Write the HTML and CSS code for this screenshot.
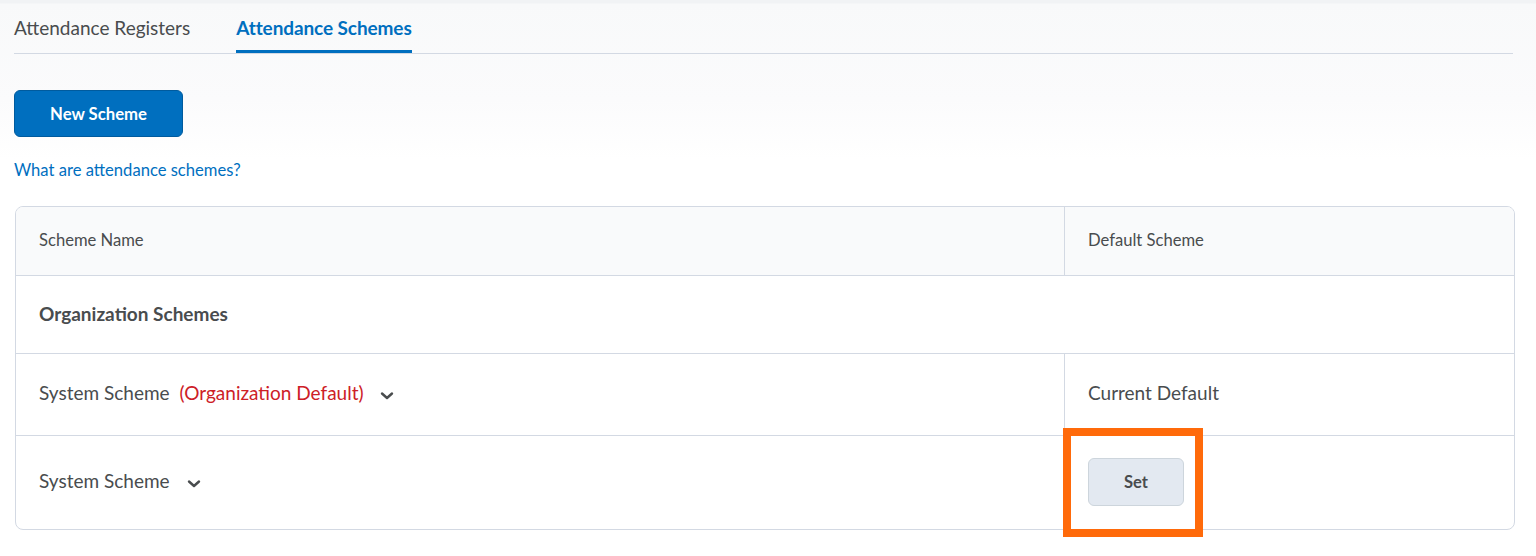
FILE: index.html
```html
<!DOCTYPE html>
<html lang="en">
<head>
<meta charset="utf-8">
<link rel="stylesheet" href="styles.css">
</head>
<body>
<div class="page">
  <nav class="tabs">
    <a class="tab">Attendance Registers</a>
    <a class="tab tab-active">Attendance Schemes</a>
  </nav>
  <div class="actions">
    <button class="btn-primary">New Scheme</button>
  </div>
  <a class="help-link">What are attendance schemes?</a>
  <div class="table-wrap">
    <table class="schemes">
      <colgroup>
        <col class="c-name">
        <col class="c-default">
      </colgroup>
      <thead>
        <tr>
          <th class="col-name th-first">Scheme Name</th>
          <th class="col-default th-last">Default Scheme</th>
        </tr>
      </thead>
      <tbody>
        <tr class="row-group">
          <td colspan="2">Organization Schemes</td>
        </tr>
        <tr class="row-1">
          <td class="col-name"><span class="name">System Scheme</span><span class="org-default">(Organization Default)</span><svg class="chev" width="14" height="10" viewBox="0 0 14 10"><path d="M2 2.5 L7 7 L12 2.5" fill="none" stroke="#494c4e" stroke-width="2.4" stroke-linecap="round" stroke-linejoin="round"/></svg></td>
          <td class="col-default">Current Default</td>
        </tr>
        <tr class="row-2">
          <td class="col-name"><span class="name name-solo">System Scheme</span><svg class="chev" width="14" height="10" viewBox="0 0 14 10"><path d="M2 2.5 L7 7 L12 2.5" fill="none" stroke="#494c4e" stroke-width="2.4" stroke-linecap="round" stroke-linejoin="round"/></svg></td>
          <td class="col-default set-cell"><button class="btn-set">Set</button><span class="highlight"></span></td>
        </tr>
      </tbody>
    </table>
  </div>
</div>
</body>
</html>
```

FILE: styles.css
```css
html, body {
  margin: 0;
  padding: 0;
}
body {
  font-family: Lato, "Open Sans", sans-serif;
  color: #494c4e;
  background: linear-gradient(to bottom, #f1f3f5 0px, #f1f3f5 3px, #f8f9fa 4px, #fbfbfc 100px, #ffffff 160px) no-repeat;
  background-color: #fff;
  min-height: 556px;
}
.page {
  padding: 0 21px 0 14px;
}
.tabs {
  display: flex;
  gap: 46px;
  height: 53px;
  border-bottom: 1px solid #d3d9e3;
  box-sizing: content-box;
  margin-right: 2px;
}
.tab {
  display: block;
  font-size: 19px;
  line-height: 24px;
  padding-top: 16px;
  height: 53px;
  box-sizing: border-box;
  color: #494c4e;
  text-decoration: none;
}
.tab-active {
  color: #006fbf;
  font-weight: 700;
  border-bottom: 3px solid #006fbf;
  letter-spacing: -0.1px;
}
.actions {
  padding-top: 36px;
}
.btn-primary {
  display: block;
  width: 169px;
  height: 47px;
  background: #006fbf;
  border: 1px solid #005b9e;
  border-radius: 6px;
  color: #fff;
  font-family: Lato, "Open Sans", sans-serif;
  font-weight: 700;
  font-size: 16.7px;
  padding: 0;
}
.help-link {
  display: block;
  margin-top: 21px;
  font-size: 16.6px;
  line-height: 24px;
  color: #006fbf;
  text-decoration: none;
}
.table-wrap {
  margin-top: 24px;
  margin-left: 1px;
  border: 1px solid #d3d9e3;
  border-radius: 8px;
}
.schemes {
  width: 100%;
  border-collapse: separate;
  border-spacing: 0;
  table-layout: fixed;
}
.c-name {
  width: 1048px;
}
.schemes th, .schemes td {
  padding: 0 0 0 23px;
  text-align: left;
  vertical-align: middle;
}
.schemes th {
  background: #f9fafb;
  font-weight: 400;
  font-size: 16.6px;
  height: 68px;
  border-bottom: 1px solid #d3d9e3;
  padding-bottom: 2px;
  box-sizing: border-box;
}
.th-first {
  border-top-left-radius: 7px;
}
.th-last {
  border-top-right-radius: 7px;
}
.schemes th.col-default, .schemes td.col-default {
  border-left: 1px solid #d3d9e3;
}
.schemes th.col-default {
  height: 69px;
}
.row-group td {
  height: 78px;
  box-sizing: border-box;
  font-weight: 700;
  font-size: 19px;
  border-bottom: 1px solid #d3d9e3;
  padding-bottom: 2px;
}
.row-1 td {
  height: 82px;
  box-sizing: border-box;
  font-size: 19px;
  border-bottom: 1px solid #d3d9e3;
  padding-bottom: 4px;
}
.row-2 td {
  height: 93px;
  box-sizing: border-box;
  font-size: 19px;
  padding-bottom: 4px;
}
.name {
  margin-right: 10px;
}
.name-solo {
  margin-right: 17px;
}
.org-default {
  color: #cd2026;
  margin-right: 16px;
}
.chev {
  vertical-align: middle;
  position: relative;
  top: 1px;
}
.set-cell {
  position: relative;
}
.btn-set {
  width: 96px;
  height: 48px;
  background: #e3e9f1;
  border: 1px solid #cdd5dc;
  border-radius: 6px;
  color: #494c4e;
  font-family: Lato, "Open Sans", sans-serif;
  font-weight: 700;
  font-size: 16.6px;
  padding: 0;
  display: block;
  margin-top: 2px;
}
.highlight {
  position: absolute;
  left: -2px;
  top: -8px;
  width: 140px;
  height: 109px;
  box-sizing: border-box;
  border: 8px solid #ff6a0a;
  pointer-events: none;
}
```
